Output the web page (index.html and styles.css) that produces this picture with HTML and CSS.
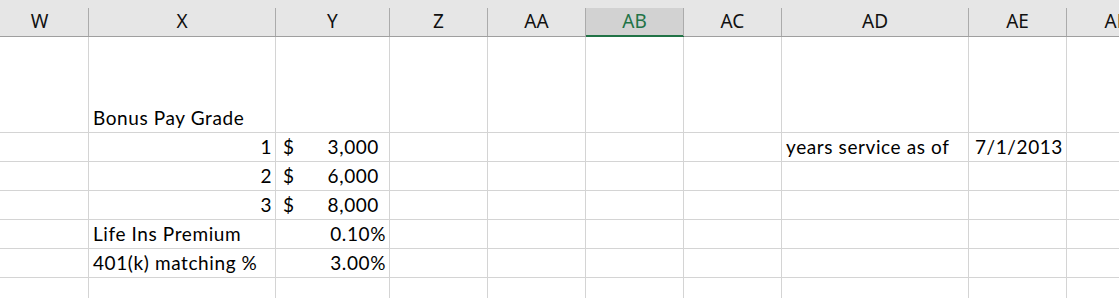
FILE: index.html
```html
<!DOCTYPE html>
<html lang="en">
<head>
    <meta charset="UTF-8">
    <meta name="viewport" content="width=device-width, initial-scale=1.0">
    <title>Bonus table</title>
    <link rel="stylesheet" href="styles.css">
</head>
<body>

    <div class="sheet">
        <div class="heads">
            <div class="h">W</div>
            <div class="h">X</div>
            <div class="h">Y</div>
            <div class="h">Z</div>
            <div class="h">AA</div>
            <div class="h sel">AB</div>
            <div class="h">AC</div>
            <div class="h">AD</div>
            <div class="h">AE</div>
            <div class="h">AF</div>
        </div>

        <div class="row tall">
            <div class="c"></div>
            <div class="c">Bonus Pay Grade</div>
            <div class="c"></div><div class="c"></div><div class="c"></div>
            <div class="c"></div><div class="c"></div><div class="c"></div>
            <div class="c"></div><div class="c"></div>
        </div>

        <div class="row">
            <div class="c"></div>
            <div class="c num">1</div>
            <div class="c acct"><span>$</span><span>3,000</span></div>
            <div class="c"></div><div class="c"></div><div class="c"></div><div class="c"></div>
            <div class="c">years service as of</div>
            <div class="c num">7/1/2013</div>
            <div class="c"></div>
        </div>

        <div class="row">
            <div class="c"></div>
            <div class="c num">2</div>
            <div class="c acct"><span>$</span><span>6,000</span></div>
            <div class="c"></div><div class="c"></div><div class="c"></div><div class="c"></div>
            <div class="c"></div><div class="c"></div><div class="c"></div>
        </div>

        <div class="row">
            <div class="c"></div>
            <div class="c num">3</div>
            <div class="c acct"><span>$</span><span>8,000</span></div>
            <div class="c"></div><div class="c"></div><div class="c"></div><div class="c"></div>
            <div class="c"></div><div class="c"></div><div class="c"></div>
        </div>

        <div class="row">
            <div class="c"></div>
            <div class="c">Life Ins Premium</div>
            <div class="c num">0.10%</div>
            <div class="c"></div><div class="c"></div><div class="c"></div><div class="c"></div>
            <div class="c"></div><div class="c"></div><div class="c"></div>
        </div>

        <div class="row">
            <div class="c"></div>
            <div class="c">401(k) matching %</div>
            <div class="c num">3.00%</div>
            <div class="c"></div><div class="c"></div><div class="c"></div><div class="c"></div>
            <div class="c"></div><div class="c"></div><div class="c"></div>
        </div>

        <div class="row">
            <div class="c"></div><div class="c"></div><div class="c"></div><div class="c"></div>
            <div class="c"></div><div class="c"></div><div class="c"></div><div class="c"></div>
            <div class="c"></div><div class="c"></div>
        </div>
    </div>

</body>
</html>
```

FILE: styles.css
```css
*, *::before, *::after {
  box-sizing: border-box;
}

body {
  margin: 0;
  overflow: hidden;
  background: #fff;
  color: #000;
  font: 19px/22px 'Lato', sans-serif;
  letter-spacing: 0.6px;
}

.sheet {
  --cols: 98px 187px 114px 98px 98px 98px 98px 187px 98px 98px;
  margin-left: -9px;
}

.heads {
  display: grid;
  grid-template-columns: var(--cols);
  padding-top: 8px;
  background-color: #e6e6e6;
  border-bottom: 1px solid #9f9f9f;
}

.h {
  height: 28px;
  border-right: 1px solid #ababab;
  text-align: center;
  font: 19px/26px 'Noto Sans', sans-serif;
  letter-spacing: 0;
  color: #111;
}

.h.sel {
  background-color: #d2d2d2;
  color: #217346;
  box-shadow: inset 0 -1px 0 #217346, 0 1px 0 #217346;
}

.row {
  display: grid;
  grid-template-columns: var(--cols);
  height: 29px;
}

.row.tall {
  height: 96px;
}

.c {
  display: flex;
  align-items: flex-end;
  padding: 0 4px 3px;
  border-right: 1px solid #d4d4d4;
  border-bottom: 1px solid #d4d4d4;
  white-space: nowrap;
  overflow: hidden;
}

.num {
  justify-content: flex-end;
  padding-right: 3px;
}

.acct {
  justify-content: space-between;
  padding-left: 7px;
  padding-right: 10px;
}
```
